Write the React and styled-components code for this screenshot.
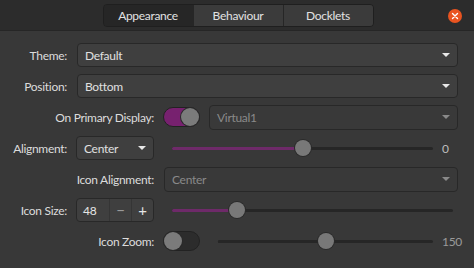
import React from 'react';
import styled, { createGlobalStyle } from 'styled-components';

const GlobalStyle = createGlobalStyle`
  html, body {
    margin: 0;
    padding: 0;
    background: #383838;
  }
  body {
    font-family: Lato, 'Noto Sans', sans-serif;
    font-size: 12px;
    letter-spacing: -0.3px;
    color: #dcdcdc;
  }
`;

const Window = styled.div`
  width: 474px;
  height: 268px;
  overflow: hidden;
  background: #383838;
  display: flex;
  flex-direction: column;
`;

const HeaderBar = styled.div`
  height: 31px;
  flex: 0 0 31px;
  background: #2c2c2c;
  border-bottom: 1px solid #262626;
  box-sizing: border-box;
  display: flex;
  align-items: center;
  justify-content: center;
  position: relative;
`;

const Tabs = styled.div`
  display: flex;
  border: 1px solid #1f1f1f;
  border-radius: 4px;
  overflow: hidden;
  height: 21px;
  margin-left: 2px;
`;

const Tab = styled.div`
  width: 89px;
  display: flex;
  align-items: center;
  justify-content: center;
  background: ${(p) => (p.active ? '#262626' : '#3b3b3b')};
  color: #e2e2e2;
  border-left: ${(p) => (p.first ? 'none' : '1px solid #262626')};
`;

const CloseButton = styled.div`
  position: absolute;
  right: 12px;
  top: 9px;
  width: 14px;
  height: 14px;
  border-radius: 50%;
  background: #e95420;
  display: flex;
  align-items: center;
  justify-content: center;
`;

const Body = styled.div`
  display: flex;
  flex-direction: column;
  gap: 7px;
  padding: 12px 16px 0 0;
`;

const Row = styled.div`
  display: flex;
  align-items: center;
  height: 24px;
  gap: ${(p) => p.gap || 10}px;
`;

const Label = styled.div`
  width: ${(p) => p.width}px;
  flex: 0 0 ${(p) => p.width}px;
  text-align: right;
  white-space: nowrap;
  color: #dcdcdc;
`;

const Combo = styled.div`
  flex: ${(p) => (p.width ? `0 0 ${p.width}px` : '1')};
  height: ${(p) => (p.tall ? 25 : 24)}px;
  box-sizing: border-box;
  border: 1px solid #282828;
  border-radius: 4px;
  display: flex;
  align-items: center;
  padding: 0 7px 0 7px;
  color: ${(p) => (p.disabled ? '#8a8a8a' : '#e0e0e0')};
  background: ${(p) => (p.disabled ? '#393939' : '#3f3f3f')};
`;

const ComboText = styled.span`
  flex: 1;
`;

const Arrow = styled.span`
  width: 0;
  height: 0;
  border-left: 4px solid transparent;
  border-right: 4px solid transparent;
  border-top: 4px solid ${(p) => (p.disabled ? '#8a8a8a' : '#e8e8e8')};
`;

const Toggle = styled.div`
  flex: 0 0 37px;
  height: 20px;
  box-sizing: border-box;
  border-radius: 10px;
  border: 1px solid #222;
  background: ${(p) => (p.on ? '#77216f' : '#2c2c2c')};
  display: flex;
  align-items: center;
  justify-content: ${(p) => (p.on ? 'flex-end' : 'flex-start')};
`;

const Knob = styled.div`
  width: 18px;
  height: 18px;
  border-radius: 50%;
  background: #7b7b7b;
  box-shadow: 0 0 0 1px #2a2a2a;
`;

const Slider = styled.div`
  flex: 0 0 ${(p) => p.width}px;
  margin-left: ${(p) => p.offset || 0}px;
  height: 3px;
  background: #262626;
  border-radius: 2px;
  position: relative;
`;

const SliderFill = styled.div`
  height: 3px;
  background: ${(p) => (p.dim ? '#262626' : '#6e2a69')};
  border-radius: 2px;
`;

const Thumb = styled.div`
  position: absolute;
  top: -7px;
  width: 16px;
  height: 16px;
  margin-left: -8px;
  border-radius: 50%;
  background: #787878;
  box-shadow: 0 0 0 1px #2a2a2a;
`;

const Value = styled.div`
  margin-left: 0;
  color: ${(p) => (p.dim ? '#9a9a9a' : '#bdbdbd')};
`;

const Spin = styled.div`
  flex: 0 0 78px;
  height: 24px;
  box-sizing: border-box;
  border: 1px solid #282828;
  border-radius: 4px;
  background: #3f3f3f;
  display: flex;
  align-items: stretch;
`;

const SpinEntry = styled.div`
  flex: 1;
  display: flex;
  align-items: center;
  padding-left: 6px;
  color: #e6e6e6;
`;

const SpinButton = styled.div`
  flex: 0 0 21px;
  border-left: 1px solid #353535;
  display: flex;
  align-items: center;
  justify-content: center;
  color: ${(p) => (p.dim ? '#9a9a9a' : '#e6e6e6')};
  font-size: 15px;
`;

function SliderBar({ width, value, offset, dim }) {
  return (
    <Slider width={width} offset={offset}>
      <SliderFill dim={dim} style={{ width: `${value * 100}%` }} />
      <Thumb style={{ left: `${value * 100}%` }} />
    </Slider>
  );
}

export default function App() {
  return (
    <Window>
      <GlobalStyle />
      <HeaderBar>
        <Tabs>
          <Tab active first>Appearance</Tab>
          <Tab>Behaviour</Tab>
          <Tab>Docklets</Tab>
        </Tabs>
        <CloseButton>
          <svg width="8" height="8" viewBox="0 0 8 8">
            <path d="M1.5 1.5 L6.5 6.5 M6.5 1.5 L1.5 6.5" stroke="#fff" strokeWidth="1.4" strokeLinecap="round" />
          </svg>
        </CloseButton>
      </HeaderBar>
      <Body>
        <Row>
          <Label width={67}>Theme:</Label>
          <Combo>
            <ComboText>Default</ComboText>
            <Arrow />
          </Combo>
        </Row>
        <Row>
          <Label width={67}>Position:</Label>
          <Combo>
            <ComboText>Bottom</ComboText>
            <Arrow />
          </Combo>
        </Row>
        <Row gap={9}>
          <Label width={154}>On Primary Display:</Label>
          <Toggle on>
            <Knob />
          </Toggle>
          <Combo disabled tall>
            <ComboText>Virtual1</ComboText>
            <Arrow disabled />
          </Combo>
        </Row>
        <Row gap={9}>
          <Label width={67}>Alignment:</Label>
          <Combo width={78}>
            <ComboText>Center</ComboText>
            <Arrow />
          </Combo>
          <SliderBar width={261} value={0.5} offset={9} />
          <Value>0</Value>
        </Row>
        <Row gap={10}>
          <Label width={154}>Icon Alignment:</Label>
          <Combo disabled tall>
            <ComboText>Center</ComboText>
            <Arrow disabled />
          </Combo>
        </Row>
        <Row gap={9}>
          <Label width={67}>Icon Size:</Label>
          <Spin>
            <SpinEntry>48</SpinEntry>
            <SpinButton dim>−</SpinButton>
            <SpinButton>+</SpinButton>
          </Spin>
          <SliderBar width={281} value={0.23} offset={9} />
        </Row>
        <Row gap={9}>
          <Label width={154}>Icon Zoom:</Label>
          <Toggle>
            <Knob />
          </Toggle>
          <SliderBar width={215} value={0.5} offset={9} dim />
          <Value dim>150</Value>
        </Row>
      </Body>
    </Window>
  );
}
